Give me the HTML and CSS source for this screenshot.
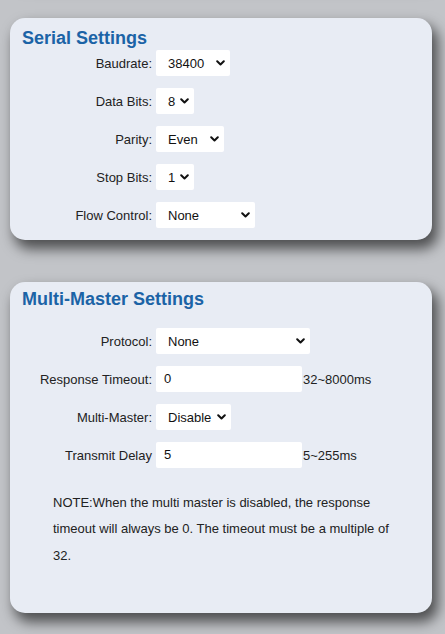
FILE: index.html
```html
<!DOCTYPE html>
<html>
<head>
<meta charset="utf-8">
<link rel="stylesheet" href="styles.css">
</head>
<body>
<div class="card card-prev"></div>

<section class="card card-serial">
  <h2 class="card-title">Serial Settings</h2>
  <div class="form">
    <label class="label">Baudrate:</label>
    <div class="field"><div class="select w-baud"><span>38400</span><svg class="chev" viewBox="0 0 9 6" width="9" height="6"><path d="M1.2 1.2 L4.5 4.5 L7.8 1.2" fill="none" stroke="#111" stroke-width="2" stroke-linecap="round" stroke-linejoin="round"/></svg></div></div>

    <label class="label">Data Bits:</label>
    <div class="field"><div class="select w-small"><span>8</span><svg class="chev" viewBox="0 0 9 6" width="9" height="6"><path d="M1.2 1.2 L4.5 4.5 L7.8 1.2" fill="none" stroke="#111" stroke-width="2" stroke-linecap="round" stroke-linejoin="round"/></svg></div></div>

    <label class="label">Parity:</label>
    <div class="field"><div class="select w-parity"><span>Even</span><svg class="chev" viewBox="0 0 9 6" width="9" height="6"><path d="M1.2 1.2 L4.5 4.5 L7.8 1.2" fill="none" stroke="#111" stroke-width="2" stroke-linecap="round" stroke-linejoin="round"/></svg></div></div>

    <label class="label">Stop Bits:</label>
    <div class="field"><div class="select w-small"><span>1</span><svg class="chev" viewBox="0 0 9 6" width="9" height="6"><path d="M1.2 1.2 L4.5 4.5 L7.8 1.2" fill="none" stroke="#111" stroke-width="2" stroke-linecap="round" stroke-linejoin="round"/></svg></div></div>

    <label class="label">Flow Control:</label>
    <div class="field"><div class="select w-flow"><span>None</span><svg class="chev" viewBox="0 0 9 6" width="9" height="6"><path d="M1.2 1.2 L4.5 4.5 L7.8 1.2" fill="none" stroke="#111" stroke-width="2" stroke-linecap="round" stroke-linejoin="round"/></svg></div></div>
  </div>
</section>

<section class="card card-multi">
  <h2 class="card-title">Multi-Master Settings</h2>
  <div class="form form-multi">
    <label class="label">Protocol:</label>
    <div class="field"><div class="select w-proto"><span>None</span><svg class="chev" viewBox="0 0 9 6" width="9" height="6"><path d="M1.2 1.2 L4.5 4.5 L7.8 1.2" fill="none" stroke="#111" stroke-width="2" stroke-linecap="round" stroke-linejoin="round"/></svg></div></div>

    <label class="label">Response Timeout:</label>
    <div class="field"><div class="input">0</div><span class="suffix">32~8000ms</span></div>

    <label class="label">Multi-Master:</label>
    <div class="field"><div class="select w-mm"><span>Disable</span><svg class="chev" viewBox="0 0 9 6" width="9" height="6"><path d="M1.2 1.2 L4.5 4.5 L7.8 1.2" fill="none" stroke="#111" stroke-width="2" stroke-linecap="round" stroke-linejoin="round"/></svg></div></div>

    <label class="label">Transmit Delay</label>
    <div class="field"><div class="input">5</div><span class="suffix">5~255ms</span></div>
  </div>
  <p class="note">NOTE:When the multi master is disabled, the response timeout will always be 0. The timeout must be a multiple of 32.</p>
</section>
</body>
</html>
```

FILE: styles.css
```css
html, body {
  margin: 0;
  padding: 0;
}
body {
  background: #c2c4c8;
  font-family: "Liberation Sans", Arial, sans-serif;
  font-size: 13px;
  color: #222;
  overflow: hidden;
  padding-bottom: 40px;
}
.card {
  box-sizing: border-box;
  width: 422px;
  margin-left: 10px;
  background: #e8ecf4;
  border-radius: 15px;
  box-shadow: 5px 8px 13px 1px rgba(0, 0, 0, 0.6);
}
.card-prev {
  height: 60px;
  margin-top: -82px;
}
.card-serial {
  margin-top: 40px;
  height: 222px;
  padding: 10px 12px 12px;
}
.card-multi {
  margin-top: 42px;
  height: 331px;
  padding: 7px 12px 0;
}
.card-title {
  margin: 0;
  font-size: 18px;
  font-weight: bold;
  line-height: 21px;
  color: #1b63a6;
}
.form {
  display: grid;
  grid-template-columns: 130px auto;
  column-gap: 4px;
  row-gap: 12px;
  margin-top: 1px;
  align-items: center;
}
.form-multi {
  margin-top: 18px;
}
.label {
  text-align: right;
  white-space: nowrap;
}
.field {
  display: flex;
  align-items: center;
  height: 26px;
}
.select {
  box-sizing: border-box;
  height: 26px;
  background: #fff;
  border-radius: 2px;
  display: flex;
  align-items: center;
  justify-content: space-between;
  padding: 0 5px 0 12px;
  color: #111;
}
.chev {
  display: block;
}
.w-baud { width: 74px; }
.w-small { width: 38px; }
.w-parity { width: 68px; }
.w-flow { width: 99px; }
.w-proto { width: 154px; }
.w-mm { width: 75px; }
.input {
  box-sizing: border-box;
  width: 146px;
  height: 26px;
  background: #fff;
  border-radius: 2px;
  padding-left: 8px;
  line-height: 26px;
  color: #111;
}
.suffix {
  margin-left: 1px;
}
.note {
  margin: 22px 0 0 31px;
  width: 340px;
  line-height: 26.3px;
}
```
